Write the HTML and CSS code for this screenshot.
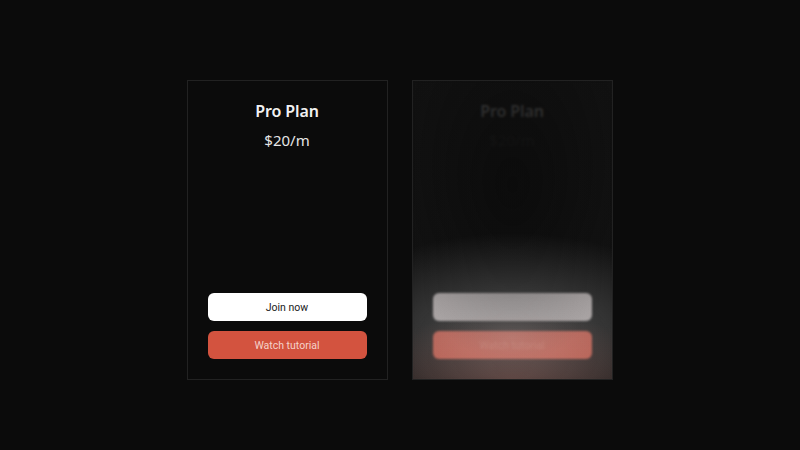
FILE: index.html
```html
<!DOCTYPE html>
<html>
<head>
<meta charset="utf-8">
<link rel="stylesheet" href="styles.css">
</head>
<body>
<div class="stage">
  <div class="card">
    <h2 class="title">Pro Plan</h2>
    <p class="price">$20/m</p>
    <div class="actions">
      <button class="btn btn-light">Join now</button>
      <button class="btn btn-red">Watch tutorial</button>
    </div>
  </div>
  <div class="card card-ghost">
    <h2 class="title">Pro Plan</h2>
    <p class="price">$20/m</p>
    <div class="actions">
      <button class="btn btn-light">Join now</button>
      <button class="btn btn-red">Watch tutorial</button>
    </div>
    <div class="veil"></div>
  </div>
</div>
</body>
</html>
```
FILE: styles.css
```css
html, body {
  margin: 0;
  padding: 0;
  background: #0b0b0b;
  height: 100%;
}
body {
  font-family: "Noto Sans", "Inter", sans-serif;
}
.stage {
  display: flex;
  justify-content: center;
  gap: 24px;
  padding-top: 80px;
  padding-right: 1px;
}
.card {
  position: relative;
  width: 199px;
  height: 298px;
  border: 1px solid #222222;
  background: #0b0b0b;
  display: flex;
  flex-direction: column;
  align-items: center;
  overflow: hidden;
}
.title {
  margin: 19px 0 0;
  font-size: 16px;
  font-weight: 600;
  color: #f2f2f2;
  line-height: 23px;
  letter-spacing: -0.1px;
}
.price {
  margin: 6px 0 0;
  font-size: 15px;
  color: #e6e6e6;
  line-height: 22px;
}
.actions {
  margin-top: auto;
  width: 159px;
  display: flex;
  flex-direction: column;
  gap: 10px;
  padding-bottom: 20px;
}
.btn {
  height: 28px;
  border: none;
  border-radius: 6px;
  font-family: "Roboto", sans-serif;
  font-size: 10.5px;
  padding: 0;
}
.btn-light {
  background: #ffffff;
  color: #1a1a1a;
}
.btn-red {
  background: #d3533f;
  color: #f5d2ca;
}
.card-ghost { background: #131313; }
.card-ghost .title { color: #4c4c4c; }
.card-ghost .price { color: #1f1f1f; }
.card-ghost .btn-light { background: #a7a0a0; color: transparent; }
.card-ghost .btn-red { background: #b24e40; color: #c0685a; }
.veil {
  position: absolute;
  inset: 0;
  backdrop-filter: blur(0.8px);
  background:
    radial-gradient(ellipse 100% 35% at 50% 86%, rgba(255,255,255,0.28), rgba(255,255,255,0) 100%),
    radial-gradient(ellipse 80% 22% at 50% 100%, rgba(220,90,70,0.22), rgba(220,90,70,0) 100%),
    radial-gradient(ellipse 60% 60% at 50% 35%, rgba(8,8,8,0.6), rgba(8,8,8,0) 100%),
    linear-gradient(to bottom, rgba(11,11,11,0.2) 0%, rgba(11,11,11,0.1) 60%, rgba(11,11,11,0.05) 100%);
}
```
